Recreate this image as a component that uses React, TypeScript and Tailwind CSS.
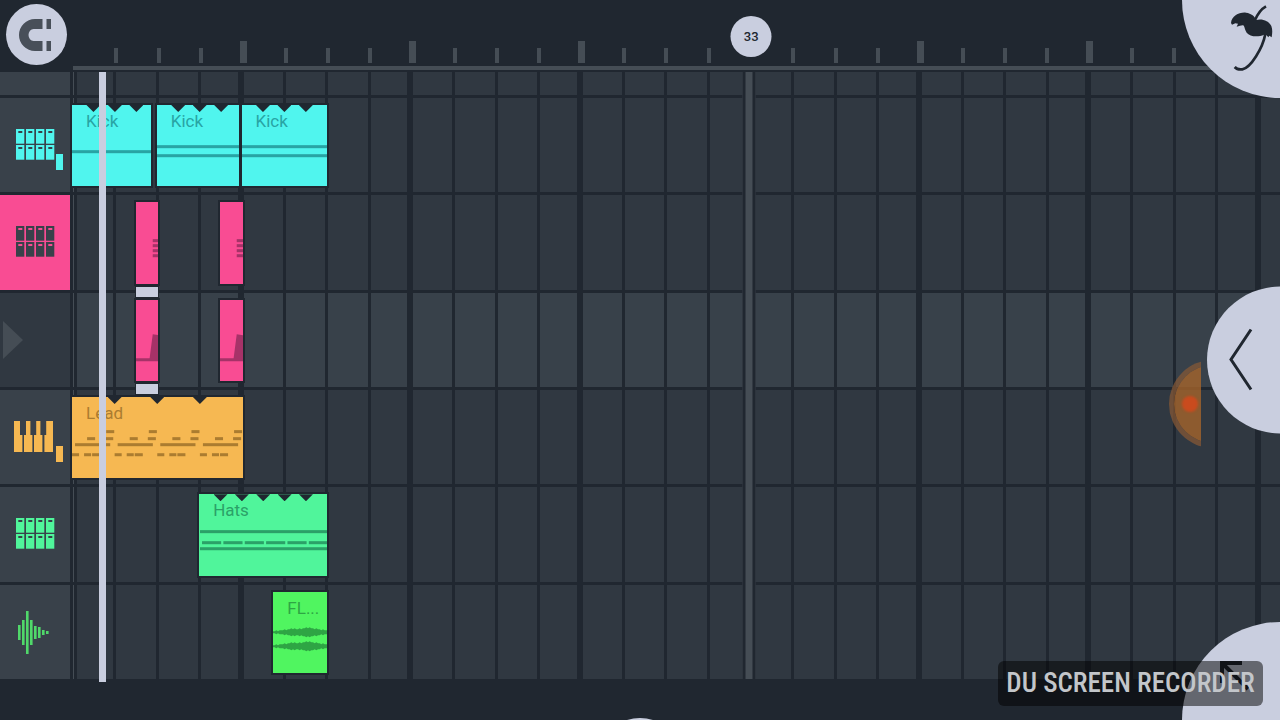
import type { ReactNode } from "react";
import clsx from "clsx";

type Rect = [x: number, y: number, width: number, height: number];

interface Clip {
  label?: string;
  name: string;
  start: number;
  length: number;
  notch?: number;
  notes?: Rect[];
  shape?: string;
  handle?: boolean;
}

interface Track {
  name: string;
  icon: ReactNode;
  header: string;
  lane: string;
  clip: string;
  ink: string;
  level?: string;
  clips: Clip[];
}

const VISIBLE_BEATS = 28.5;
const BEAT_UNITS = 42.4;
const CLIP_HEIGHT = 81;

const beats = Array.from({ length: 29 }, (_, i) => i);
const pct = (value: number, total = VISIBLE_BEATS) => `${(value / total) * 100}%`;

const repeat = (count: number, step: number, rects: Rect[]): Rect[] =>
  Array.from({ length: count }, (_, i) => i).flatMap((i) =>
    rects.map(([x, y, w, h]): Rect => [x + i * step, y, w, h])
  );

const kickNotes: Rect[] = [
  [0, 40, 90, 3],
  [0, 49, 90, 3],
];

const snareNotes: Rect[] = [
  [16, 37, 6, 3],
  [16, 42, 6, 3],
  [16, 47, 6, 3],
  [16, 52, 6, 3],
];

const leadNotes = repeat(4, BEAT_UNITS, [
  [34, 33, 8, 3],
  [15, 40, 8, 3],
  [33, 40, 8, 3],
  [3, 46, 35, 3],
  [0, 56, 7, 3],
  [12, 56, 7, 3],
  [20, 56, 8, 3],
]);

const hatNotes: Rect[] = [
  [1, 36, 127, 3],
  [1, 53, 127, 3],
  ...repeat(6, BEAT_UNITS / 2, [[3, 47, 19, 3]]),
];

const envelope = "M0 58H13L16 34L22 35V61H0Z";

function waveform(center: number) {
  const levels = [
    1, 1, 2, 1, 2, 2, 2, 3, 2, 3, 3, 4, 3, 4, 3, 3, 4, 3, 4, 4, 5, 4, 5, 4, 4, 3, 4, 3, 3, 2, 3, 2, 2, 2,
  ];
  const step = 54 / (levels.length - 1);
  const top = levels.map((v, i) => `L${i * step} ${center - v}`).join("");
  const bottom = levels
    .map((v, i) => `L${i * step} ${center + v}`)
    .reverse()
    .join("");
  return `M0 ${center}${top}${bottom}Z`;
}

function PadsIcon({ slot }: { slot: string }) {
  return (
    <svg viewBox="0 0 39 33" className="h-[33px] w-[39px]" aria-hidden="true">
      {[0, 16].map((y) =>
        [0, 10, 20, 30].map((x) => (
          <g key={`${x}-${y}`}>
            <rect x={x} y={y} width="8.3" height="14.7" fill="currentColor" />
            <rect x={x + 2.3} y={y + 2} width="4" height="2" className={slot} />
          </g>
        ))
      )}
    </svg>
  );
}

function KeysIcon() {
  return (
    <svg viewBox="0 0 43 33" className="h-[33px] w-[43px]" fill="currentColor" aria-hidden="true">
      <path d="M0 0H6V14H8.4V31H0Z" />
      <path d="M12 0H16.4V14H18.4V31H10V14H12Z" />
      <path d="M22.2 0H26.4V14H28.4V31H20V14H22.2Z" />
      <path d="M32.2 0H39V31H30.4V14H32.2Z" />
    </svg>
  );
}

function WaveIcon() {
  const bars = [15, 25, 43, 25, 13, 11, 5, 3];
  return (
    <svg viewBox="0 -2 35 45" className="h-[45px] w-[35px]" fill="currentColor" aria-hidden="true">
      {bars.map((h, i) => (
        <rect key={i} x={i * 4} y={(43 - h) / 2} width="2.6" height={h} />
      ))}
    </svg>
  );
}

const tracks: Track[] = [
  {
    name: "Kick",
    icon: <PadsIcon slot="fill-[#39414a]" />,
    header: "bg-[#39414a] text-[#50f5ee]",
    lane: "bg-[#303841]",
    clip: "bg-[#50f5ee]",
    ink: "text-[#28a4a4]",
    level: "bg-[#50f5ee]",
    clips: [
      { name: "Kick 1", label: "Kick", start: 0, length: 1.84, notch: 0.5, notes: [[0, 45, 80, 3]] },
      { name: "Kick 2", label: "Kick", start: 2, length: 1.92, notch: 0.5, notes: kickNotes },
      { name: "Kick 3", label: "Kick", start: 4, length: 2, notch: 0.5, notes: kickNotes },
    ],
  },
  {
    name: "Snare",
    icon: <PadsIcon slot="fill-[#f94c93]" />,
    header: "bg-[#f94c93] text-[#39414a]",
    lane: "bg-[#303841]",
    clip: "bg-[#f94c93]",
    ink: "text-[#a63268]",
    clips: [
      { name: "Snare 1", start: 1.5, length: 0.5, notes: snareNotes, handle: true },
      { name: "Snare 2", start: 3.5, length: 0.5, notes: snareNotes },
    ],
  },
  {
    name: "Snare automation",
    icon: (
      <svg viewBox="0 0 20 38" className="mr-auto ml-[3px] h-[38px] w-5 shrink-0" aria-hidden="true">
        <path d="M0 0L20 19L0 38Z" fill="currentColor" />
      </svg>
    ),
    header: "bg-[#303841] text-[#454d55]",
    lane: "bg-[#38414a]",
    clip: "bg-[#f94c93]",
    ink: "text-[#a63268]",
    clips: [
      { name: "Envelope 1", start: 1.5, length: 0.5, shape: envelope, handle: true },
      { name: "Envelope 2", start: 3.5, length: 0.5, shape: envelope },
    ],
  },
  {
    name: "Lead",
    icon: <KeysIcon />,
    header: "bg-[#39414a] text-[#f6b852]",
    lane: "bg-[#303841]",
    clip: "bg-[#f6b852]",
    ink: "text-[#ab7c30]",
    level: "bg-[#f6b852]",
    clips: [{ name: "Lead", label: "Lead", start: 0, length: 4, notch: 1, notes: leadNotes }],
  },
  {
    name: "Hats",
    icon: <PadsIcon slot="fill-[#39414a]" />,
    header: "bg-[#39414a] text-[#50f59b]",
    lane: "bg-[#303841]",
    clip: "bg-[#50f59b]",
    ink: "text-[#2ba168]",
    clips: [{ name: "Hats", label: "Hats", start: 3, length: 3, notch: 0.5, notes: hatNotes }],
  },
  {
    name: "Audio",
    icon: <WaveIcon />,
    header: "bg-[#39414a] text-[#50d86a]",
    lane: "bg-[#303841]",
    clip: "bg-[#50f560]",
    ink: "text-[#2ea544]",
    clips: [
      { name: "FL audio", label: "FL...", start: 4.75, length: 1.25, shape: waveform(40) + waveform(54) },
    ],
  },
];

function GridCells({ lane }: { lane: string }) {
  return (
    <div className="flex h-full overflow-hidden">
      <div className="w-[2px] shrink-0 border-r border-[#454d55]" />
      {beats.map((beat) => (
        <div
          key={beat}
          className={clsx(
            "shrink-0 border-[#202730] bg-clip-padding",
            lane,
            beat === 0 && "border-l-3",
            beat % 4 === 3 ? "border-r-6" : "border-r-3"
          )}
          style={{ width: pct(1) }}
        />
      ))}
    </div>
  );
}

function ClipBlock({ clip, track }: { clip: Clip; track: Track }) {
  const notches = clip.notch ? Math.ceil(clip.length / clip.notch) - 1 : 0;

  return (
    <div
      className={clsx("absolute top-[7px] bottom-[9px] z-10 shadow-[0_0_0_2px_#202730]", track.clip, track.ink)}
      style={{ left: pct(clip.start), width: `calc(${pct(clip.length)} + 1px)` }}
    >
      <button type="button" aria-label={clip.name} className="relative block h-full w-full overflow-hidden text-left">
        <svg
          viewBox={`0 0 ${clip.length * BEAT_UNITS} ${CLIP_HEIGHT}`}
          preserveAspectRatio="none"
          className="absolute inset-0 h-full w-full"
          fill="currentColor"
          aria-hidden="true"
        >
          {clip.notes?.map(([x, y, w, h], i) => (
            <rect key={i} x={x} y={y} width={w} height={h} />
          ))}
          {clip.shape && <path d={clip.shape} />}
        </svg>
        {Array.from({ length: notches }, (_, i) => (
          <span
            key={i}
            className="absolute top-0 h-[7px] w-[14px] -translate-x-1/2 bg-[#202730] [clip-path:polygon(0_0,100%_0,50%_100%)]"
            style={{ left: pct((i + 1) * clip.notch!, clip.length) }}
          />
        ))}
        {clip.label && <span className="absolute top-1.5 left-[14px] text-[17px] leading-5">{clip.label}</span>}
      </button>
      {clip.handle && (
        <div className="absolute top-full mt-[3px] h-[10px] w-full bg-[#c9cedf] shadow-[0_0_0_1px_#202730]" />
      )}
    </div>
  );
}

function TrackRow({ track }: { track: Track }) {
  return (
    <div className="flex min-h-0 flex-1 border-b-3 border-[#202730]">
      <button
        type="button"
        aria-label={track.name}
        className={clsx("relative mr-[2px] flex w-[70px] shrink-0 items-center justify-center", track.header)}
      >
        {track.icon}
        {track.level && <span className={clsx("absolute right-[7px] bottom-[22px] h-4 w-[7px]", track.level)} />}
      </button>
      <div className="relative flex-1">
        <GridCells lane={track.lane} />
        <div className="absolute inset-x-0 top-0 -bottom-[3px]">
          {track.clips.map((clip) => (
            <ClipBlock key={clip.name} clip={clip} track={track} />
          ))}
        </div>
      </div>
    </div>
  );
}

function Ruler() {
  return (
    <div className="relative flex flex-1 flex-col justify-end overflow-hidden pb-[2px]">
      <div className="ml-[2px] flex items-end pb-[3px]" style={{ paddingLeft: pct(0.5) }}>
        {beats.slice(1).map((beat) => (
          <div key={beat} className="flex shrink-0 justify-center" style={{ width: `${100 / (VISIBLE_BEATS - 0.5)}%` }}>
            {beat !== 16 && (
              <div className={clsx("bg-[#454d55]", beat % 4 === 0 ? "h-[22px] w-[7px]" : "h-[15px] w-1")} />
            )}
          </div>
        ))}
      </div>
      <div className="ml-px h-1 bg-[#454d55]" />
      <div
        className="absolute top-4 ml-px flex size-[41px] -translate-x-1/2 items-center justify-center rounded-full bg-[#c9cedf] text-[13px] font-medium text-[#202730]"
        style={{ left: pct(16) }}
      >
        33
      </div>
    </div>
  );
}

function MagnetIcon() {
  return (
    <svg viewBox="0 0 32 32" className="mr-1 size-8" fill="#484f59" aria-hidden="true">
      <path d="M23.500 0H16A16 16 0 0 0 16 32H23.500V22H14.500A5 6 0 0 1 14.500 10H23.500Z" />
      <path d="M27.500 0H32V10H27.500ZM27.500 22H32V32H27.500Z" />
    </svg>
  );
}

function PalmIcon() {
  return (
    <svg viewBox="450 12 132 204" className="h-[68px] w-11" aria-hidden="true">
      <g fill="none" stroke="#202730" strokeWidth="8">
        <path d="M558 19Q538 30 525 60" />
        <path d="M556 102C548 145 512 203 487 208Q472 210 464 201" />
      </g>
      <path
        fill="#202730"
        d="M453 69C455 47 478 36 498 38C514 40 525 49 528 60C546 55 566 62 574 78C578 89 577 100 575 112L568 107L565 112L559 105L552 104C535 112 509 110 500 98C494 90 495 82 490 76C485 75 478 78 470 80L474 71L466 70L456 74Z"
      />
    </svg>
  );
}

export default function App() {
  return (
    <div className="relative flex h-screen flex-col overflow-hidden bg-[#202730] font-[Roboto,sans-serif]">
      <header className="flex h-[72px] shrink-0">
        <div className="w-[72px] shrink-0 pt-1 pl-1.5">
          <button
            type="button"
            aria-label="Snap to grid"
            className="flex size-[61px] items-center justify-center rounded-full bg-[#c9cedf]"
          >
            <MagnetIcon />
          </button>
        </div>
        <Ruler />
      </header>

      <main className="relative flex min-h-0 flex-1 flex-col">
        <div className="flex h-[26px] shrink-0 border-b-3 border-[#202730]">
          <div className="mr-[2px] w-[70px] shrink-0 bg-[#39414a]" />
          <div className="min-w-0 flex-1">
            <GridCells lane="bg-[#303841]" />
          </div>
        </div>
        {tracks.map((track) => (
          <TrackRow key={track.name} track={track} />
        ))}
        <div className="pointer-events-none absolute inset-y-0 right-0 left-[70px]">
          <div
            className="absolute top-0 bottom-[3px] w-[13px] -translate-x-1/2 border-x-3 border-[#202730] bg-[#454d55]"
            style={{ left: pct(16) }}
          />
          <div className="absolute inset-y-0 z-20 w-[7px] bg-[#c9cedf]" style={{ left: pct(0.68) }} />
        </div>
      </main>
      <footer className="h-[38px] shrink-0" />

      <button
        type="button"
        aria-label="Transport"
        className="absolute -bottom-[84px] left-1/2 z-30 size-[86px] -translate-x-1/2 rounded-full bg-[#c9cedf]"
      />

      <div className="absolute top-1/2 right-[79px] z-20 mt-px h-[86px] w-[32px] overflow-hidden" aria-hidden="true">
        <div className="absolute -top-px left-0 size-[88px] rounded-full border-5 border-[#8a5a35]/70 bg-[#a5642a]/80 bg-clip-padding" />
        <div className="absolute top-[35px] left-[13px] size-4 rounded-full bg-[#c94b1e] blur-[1px]" />
      </div>

      <button
        type="button"
        aria-label="Menu"
        className="absolute -top-[98px] -right-[98px] z-30 size-[196px] rounded-full bg-[#c9cedf]"
      >
        <span className="absolute bottom-[26px] left-[48px]">
          <PalmIcon />
        </span>
      </button>
      <button
        type="button"
        aria-label="Open panel"
        className="absolute top-1/2 -right-[74px] z-30 flex size-[147px] -translate-y-1/2 items-center rounded-full bg-[#c9cedf] pl-[22px]"
      >
        <svg viewBox="0 0 24 64" className="h-16 w-6" fill="none" stroke="#202730" strokeWidth="3" aria-hidden="true">
          <path d="M22 1L2 31L22 61" />
        </svg>
      </button>
      <button
        type="button"
        aria-label="Resize"
        className="absolute -right-[98px] -bottom-[98px] z-30 size-[196px] rounded-full bg-[#c9cedf]"
      >
        <svg
          viewBox="0 0 30 30"
          className="absolute top-[39px] left-[38px] size-[30px]"
          fill="none"
          stroke="#202730"
          strokeWidth="4"
          aria-hidden="true"
        >
          <path d="M2 22V2H22M3 3L28 28" />
        </svg>
      </button>

      <div className="absolute right-[17px] bottom-[14px] z-40 flex h-[45px] w-[265px] items-center justify-center rounded-md bg-black/50 font-['Roboto_Condensed','Liberation_Sans_Narrow',Roboto,sans-serif] text-[27px] font-medium whitespace-nowrap text-[#c3c6ca]">
        DU SCREEN RECORDER
      </div>
    </div>
  );
}
